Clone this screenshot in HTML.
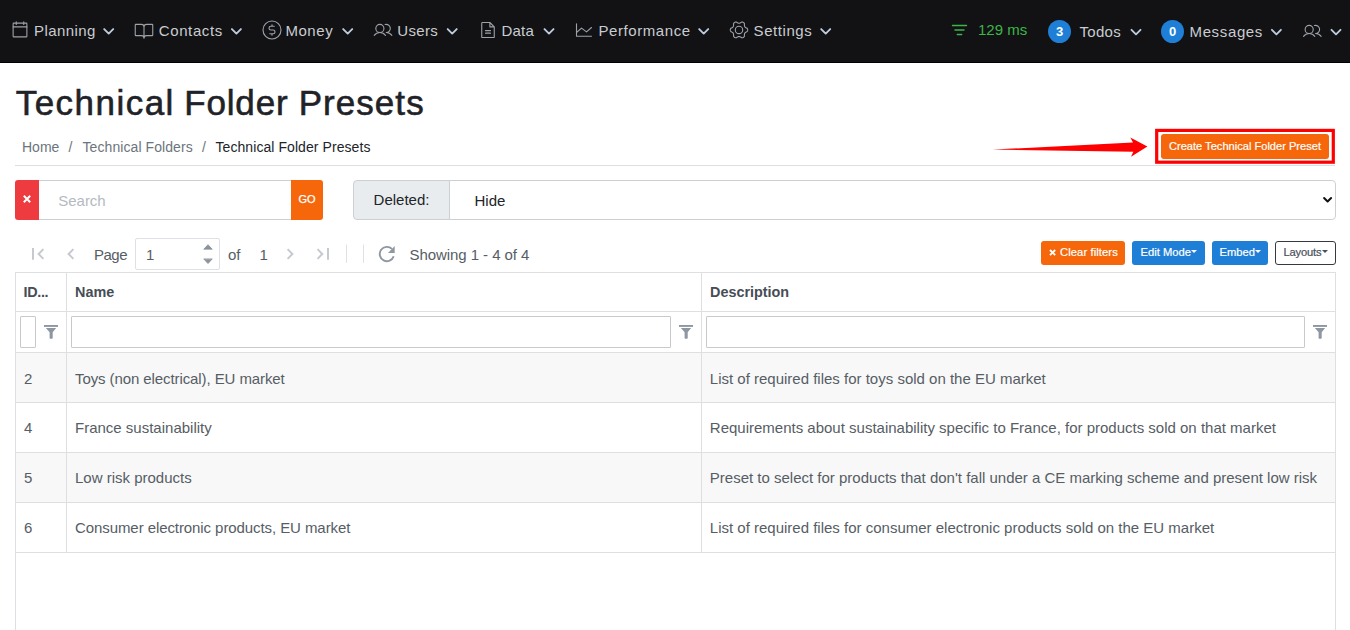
<!DOCTYPE html>
<html>
<head>
<meta charset="utf-8">
<title>Technical Folder Presets</title>
<style>
*{box-sizing:border-box;margin:0;padding:0}
html,body{width:1350px;height:630px;overflow:hidden;background:#fff}
body{font-family:"Liberation Sans",sans-serif;color:#212529;position:relative}
.abs{position:absolute;white-space:nowrap}
/* NAV */
#nav{position:absolute;left:0;top:0;width:1350px;height:63px;background:#121214;border-bottom:1px solid #000}
.ni{position:absolute;top:21px;font-size:15px;line-height:20px;color:#c9ccd1;white-space:nowrap}
.ico{position:absolute;overflow:visible}
.chev{position:absolute;top:29px;width:11px;height:6px}
.badge{position:absolute;top:20px;width:23px;height:23px;border-radius:50%;background:#1f7fd6;color:#fff;font-size:13px;font-weight:bold;line-height:23px;text-align:center}
/* HEADER */
#title{left:15.700px;top:83px;font-size:35px;line-height:40px;letter-spacing:1px;font-weight:normal;color:#1f2328;-webkit-text-stroke:0.600px #1f2328}
.bc{top:138px;font-size:14px;line-height:18px;color:#6c757d}
#hr{position:absolute;left:15px;top:165px;width:1320px;height:1px;background:#dcdfe2}

/* SEARCH */
#sx{position:absolute;left:15px;top:180px;width:24px;height:40px;background:#ee3b40;border-radius:3px 0 0 3px}
#sin{position:absolute;left:39px;top:180px;width:253px;height:40px;border:1px solid #cdd0d3;border-left:none;border-right:none;background:#fff}
#sph{left:58.200px;top:191px;font-size:15px;line-height:20px;color:#b3bac1}
#sgo{position:absolute;left:291px;top:180px;width:32px;height:40px;background:#f5670a;border-radius:0 3px 3px 0;color:#fff;font-size:11px;line-height:38px;text-align:center;-webkit-text-stroke:.25px #fff}
#dlab{position:absolute;left:353px;top:180px;width:97px;height:40px;background:#e9ecef;border:1px solid #cdd0d3;border-radius:4px 0 0 4px;font-size:15px;line-height:38px;text-align:center;color:#212529}
#dsel{position:absolute;left:449px;top:180px;width:887px;height:40px;background:#fff;border:1px solid #cdd0d3;border-radius:0 4px 4px 0}
#dsel span{position:absolute;left:24.500px;top:10px;font-size:15px;line-height:20px;color:#212529}
/* BUTTONS */
.btn{position:absolute;top:241px;height:24px;border-radius:3px;color:#fff;font-size:11.200px;line-height:23px;white-space:nowrap;-webkit-text-stroke:.2px currentColor}
.caret{display:inline-block;width:0;height:0;border-left:3.100px solid transparent;border-right:3.100px solid transparent;border-top:3.100px solid currentColor;vertical-align:2.800px;margin-left:.5px}
/* PAGER */
.pg{position:absolute;top:245px;font-size:15px;line-height:20px;color:#565d65;white-space:nowrap}
/* GRID */
#grid{position:absolute;left:15px;top:272px;width:1321px;height:358px;border:1px solid #dedfe0;border-bottom:none}
.row{position:absolute;left:0;width:1319px;border-bottom:1px solid #dedfe0}
.v{position:absolute;top:0;width:1px;background:#dedfe0}
.cell{position:absolute;font-size:15px;line-height:20px;color:#565d65;white-space:nowrap}
.hd{position:absolute;font-size:14.400px;font-weight:bold;line-height:20px;color:#464d55;white-space:nowrap}
.fin{position:absolute;border:1px solid #c8c9cb;border-radius:1px;background:#fff}
</style>
</head>
<body>
<div id="nav">
<svg class="ico" style="left:0;top:0" width="1350" height="62" viewBox="0 0 1350 62" fill="none" stroke="#9da2a9" stroke-width="1.1" stroke-linecap="round" stroke-linejoin="round">
<!-- calendar -->
<g transform="translate(10,20) scale(0.078125)" stroke-width="14"><rect x="40" y="40" width="176" height="176" rx="8"/><path d="M40 88H216M80 24V56M176 24V56"/></g>
<!-- book -->
<g transform="translate(134,20) scale(0.078125)" stroke-width="14"><path d="M128 88a32 32 0 0 1 32-32h72a8 8 0 0 1 8 8V192a8 8 0 0 1-8 8H160a32 32 0 0 0-32 32M16 192a8 8 0 0 0 8 8H96a32 32 0 0 1 32 32V88A32 32 0 0 0 96 56H24a8 8 0 0 0-8 8Z"/></g>
<!-- dollar -->
<g transform="translate(260,18) scale(0.09375)" stroke-width="12"><circle cx="128" cy="128" r="96"/><path d="M128 72V88M128 168V184M104 168h36a20 20 0 0 0 0-40H116a20 20 0 0 1 0-40h36"/></g>
<!-- users -->
<g transform="translate(373,20) scale(0.078125)" stroke-width="14"><circle cx="88" cy="108" r="52"/><path d="M155.410 57.940A52 52 0 1 1 169.520 160M16 197.400a88 88 0 0 1 144 0M169.520 160a87.900 87.900 0 0 1 72 37.400"/></g>
<!-- file -->
<g transform="translate(478,20) scale(0.078125)" stroke-width="14"><path d="M200 224H56a8 8 0 0 1-8-8V40a8 8 0 0 1 8-8h96l56 56V216a8 8 0 0 1-8 8ZM152 32V88h56M96 136h64M96 168h64"/></g>
<!-- chart -->
<g transform="translate(574,20) scale(0.078125)" stroke-width="14"><path d="M224 208H32V48M224 96L160 152 96 104 32 160"/></g>
<!-- gear -->
<circle cx="739" cy="29.900" r="3.700"/><path d="M747.70 29.90L747.67 30.28L747.58 30.65L747.44 31.01L747.22 31.35L746.93 31.66L746.34 31.87L745.98 32.10L745.66 32.33L745.38 32.54L745.13 32.76L744.92 32.98L744.76 33.22L744.63 33.49L744.54 33.78L744.48 34.10L744.43 34.46L744.40 34.84L744.37 35.27L744.49 35.89L744.37 36.30L744.18 36.65L743.94 36.96L743.66 37.22L743.35 37.43L743.01 37.60L742.64 37.71L742.26 37.76L741.86 37.75L741.44 37.65L740.97 37.24L740.58 37.05L740.23 36.88L739.90 36.75L739.59 36.64L739.29 36.57L739.00 36.55L738.71 36.57L738.41 36.64L738.10 36.75L737.77 36.88L737.42 37.05L737.03 37.24L736.56 37.65L736.14 37.75L735.74 37.76L735.36 37.71L734.99 37.60L734.65 37.43L734.34 37.22L734.06 36.96L733.82 36.65L733.63 36.30L733.51 35.89L733.63 35.27L733.60 34.84L733.57 34.46L733.52 34.10L733.46 33.78L733.37 33.49L733.24 33.23L733.08 32.98L732.87 32.76L732.62 32.54L732.34 32.33L732.02 32.10L731.66 31.87L731.07 31.66L730.78 31.35L730.56 31.01L730.42 30.65L730.33 30.28L730.30 29.90L730.33 29.52L730.42 29.15L730.56 28.79L730.78 28.45L731.07 28.14L731.66 27.93L732.02 27.70L732.34 27.47L732.62 27.26L732.87 27.04L733.08 26.82L733.24 26.57L733.37 26.31L733.46 26.02L733.52 25.70L733.57 25.34L733.60 24.96L733.63 24.53L733.51 23.91L733.63 23.50L733.82 23.15L734.06 22.84L734.34 22.58L734.65 22.37L734.99 22.20L735.36 22.09L735.74 22.04L736.14 22.05L736.56 22.15L737.03 22.56L737.42 22.75L737.77 22.92L738.10 23.05L738.41 23.16L738.71 23.23L739.00 23.25L739.29 23.23L739.59 23.16L739.90 23.05L740.23 22.92L740.58 22.75L740.97 22.56L741.44 22.15L741.86 22.05L742.26 22.04L742.64 22.09L743.01 22.20L743.35 22.37L743.66 22.58L743.94 22.84L744.18 23.15L744.37 23.50L744.49 23.91L744.37 24.53L744.40 24.96L744.43 25.34L744.48 25.70L744.54 26.02L744.63 26.31L744.76 26.58L744.92 26.82L745.13 27.04L745.38 27.26L745.66 27.47L745.98 27.70L746.34 27.93L746.93 28.14L747.22 28.45L747.44 28.79L747.58 29.15L747.67 29.52Z"/>
<!-- users right -->
<g transform="translate(1302.3,21) scale(0.078125)" stroke-width="14"><circle cx="88" cy="108" r="52"/><path d="M155.410 57.940A52 52 0 1 1 169.520 160M16 197.400a88 88 0 0 1 144 0M169.520 160a87.900 87.900 0 0 1 72 37.400"/></g>
<!-- filter (green) -->
<path d="M952.500 25.500h14M955 30h9M957.300 34.500h4.400" stroke="#3db54a" stroke-width="1.400"/>
<!-- chevrons -->
<g stroke="#bccbdf" stroke-width="1.900">
<path d="M104.2 29.1l4.500 4.500 4.500-4.500"/>
<path d="M231.9 29.1l4.500 4.500 4.500-4.500"/>
<path d="M343.2 29.1l4.500 4.500 4.500-4.500"/>
<path d="M447.7 29.1l4.500 4.500 4.500-4.500"/>
<path d="M544.5 29.1l4.500 4.500 4.500-4.500"/>
<path d="M699.2 29.1l4.500 4.500 4.500-4.500"/>
<path d="M821.2 29.1l4.500 4.500 4.500-4.500"/>
<path d="M1131.5 29.8l4.500 4.500 4.500-4.500"/>
<path d="M1271.9 29.8l4.500 4.500 4.500-4.500"/>
<path d="M1331.5 29.8l4.500 4.500 4.500-4.500"/>
</g>
</svg>
<div class="ni" style="left:34.10px;letter-spacing:0.41px">Planning</div>
<div class="ni" style="left:158.80px;letter-spacing:0.6px">Contacts</div>
<div class="ni" style="left:285.40px;letter-spacing:0.57px">Money</div>
<div class="ni" style="left:397.35px;letter-spacing:0.34px">Users</div>
<div class="ni" style="left:501.50px;letter-spacing:0.2px">Data</div>
<div class="ni" style="left:598.50px;letter-spacing:0.57px">Performance</div>
<div class="ni" style="left:753.60px;letter-spacing:0.57px">Settings</div>
<div class="ni" style="left:978px;top:20px;font-size:15px;color:#3db54a">129 ms</div>
<div class="badge" style="left:1048px">3</div>
<div class="ni" style="left:1079.40px;top:22px;letter-spacing:0.33px">Todos</div>
<div class="badge" style="left:1161px">0</div>
<div class="ni" style="left:1189.50px;top:22px;letter-spacing:0.64px">Messages</div>
</div>
<div id="title" class="abs"><span style="position:absolute;left:0;letter-spacing:1.470px">Technical</span><span style="position:absolute;left:168.600px;letter-spacing:.820px">Folder</span><span style="position:absolute;left:283px;letter-spacing:1.050px">Presets</span></div>
<div class="abs bc" style="left:22px">Home</div>
<div class="abs bc" style="left:68.500px">/</div>
<div class="abs bc" style="left:82.500px;letter-spacing:.08px">Technical Folders</div>
<div class="abs bc" style="left:202px">/</div>
<div class="abs bc" style="left:215.500px;color:#212529;letter-spacing:.07px">Technical Folder Presets</div>
<!-- arrow + highlight -->
<svg class="ico" style="left:0;top:0" width="1350" height="630" viewBox="0 0 1350 630">
<polygon points="992.500,149.600 1133,142.600 1130.300,137.400 1147.400,146.500 1131,156.700 1133.300,151.700" fill="#ff0000"/>
<rect x="1156.700" y="130.400" width="176.600" height="31.800" fill="none" stroke="#ff0000" stroke-width="3.200"/>
</svg>
<div class="abs" style="left:1161px;top:134px;width:168px;height:25px;border-radius:3px;background:#f5670a;color:#fff;font-size:11.100px;line-height:24px;text-align:center;-webkit-text-stroke:.2px #fff">Create Technical Folder Preset</div>
<div id="hr"></div>
<!-- search -->
<div id="sx"><svg class="ico" style="left:8px;top:15px" width="8" height="8" viewBox="0 0 8 8"><path d="M.8.8l6.400 6.400M7.200.8L.8 7.200" stroke="#fff" stroke-width="2" stroke-linecap="butt"/></svg></div>
<div id="sin"></div>
<div id="sph" class="abs">Search</div>
<div id="sgo">GO</div>
<div id="dlab">Deleted:</div>
<div id="dsel"><span>Hide</span><svg class="ico" style="left:872.500px;top:16.400px" width="10" height="7" viewBox="0 0 10 7"><path d="M1.100 1l3.500 3.500 3.500-3.500" fill="none" stroke="#111" stroke-width="2" stroke-linecap="round" stroke-linejoin="round"/></svg></div>
<!-- pager -->
<svg class="ico" style="left:0;top:0" width="600" height="280" viewBox="0 0 600 280" fill="none" stroke-linecap="round" stroke-linejoin="round">
<g stroke="#c6cad0" stroke-width="2" stroke-linecap="butt" stroke-linejoin="miter">
<path d="M33 248v11.800M43.400 249.100L38.600 254l4.800 4.900"/>
<path d="M73.400 249.100L68.600 254l4.800 4.900"/>
<path d="M287.600 249.100L292.400 254l-4.800 4.900"/>
<path d="M317.500 249.100L322.300 254l-4.800 4.900M328 248v11.800"/>
</g>
<path d="M346.500 245v17.500M363.500 245v17.500" stroke="#dee2e6" stroke-width="1"/>
<path d="M393.700 256.200A7.150 7.150 0 1 1 391.960 248.940" stroke="#8e97a2" stroke-width="1.900" stroke-linecap="butt"/>
<path d="M394.700 246V252.900H388z" fill="#8e97a2"/>
<path d="M204 249l4-4.300 4 4.300zM204 259.200l4 4.300 4-4.300z" fill="#8b929a" stroke="#8b929a" stroke-width=".8"/>
</svg>
<div class="pg" style="left:94px;letter-spacing:-.5px">Page</div>
<div class="abs" style="left:135px;top:238px;width:85px;height:32px;border:1px solid #dee2e6;border-radius:2px"></div>
<div class="pg" style="left:146px">1</div>
<div class="pg" style="left:228px">of</div>
<div class="pg" style="left:259.500px">1</div>
<div class="pg" style="left:409.500px;letter-spacing:-.06px">Showing 1 - 4 of 4</div>
<!-- toolbar buttons -->
<div class="btn" style="left:1041px;width:84px;background:#f5670a"><svg class="ico" style="left:8.400px;top:7.700px" width="8" height="8" viewBox="0 0 8 8"><path d="M1 1l5.200 5.200M6.200 1L1 6.200" stroke="#fff" stroke-width="1.800" stroke-linecap="butt"/></svg><span style="position:absolute;left:19px;letter-spacing:.1px">Clear filters</span></div>
<div class="btn" style="left:1132px;width:73px;background:#1f7fd6"><span style="position:absolute;left:8.500px">Edit Mode<i class="caret"></i></span></div>
<div class="btn" style="left:1212px;width:56px;background:#1f7fd6"><span style="position:absolute;left:7.500px">Embed<i class="caret"></i></span></div>
<div class="btn" style="left:1275px;width:61px;background:#fff;border:1px solid #343a40;color:#495057;line-height:21px"><span style="position:absolute;left:7.500px;letter-spacing:-.2px">Layouts<i class="caret"></i></span></div>
<div id="grid">
<div class="row" style="top:0;height:39px"></div>
<div class="row" style="top:39px;height:41px"></div>
<div class="row" style="top:80px;height:50px;background:#f8f8f8"></div>
<div class="row" style="top:130px;height:50px"></div>
<div class="row" style="top:180px;height:50px;background:#f8f8f8"></div>
<div class="row" style="top:230px;height:50px"></div>
<div class="v" style="left:50px;height:280px"></div>
<div class="v" style="left:685px;height:280px"></div>
</div>
<div class="hd" style="left:23.600px;top:282px;letter-spacing:-.35px">ID...</div>
<div class="hd" style="left:75px;top:282px">Name</div>
<div class="hd" style="left:710px;top:282px">Description</div>
<div class="fin" style="left:20px;top:316px;width:16px;height:32px"></div>
<div class="fin" style="left:71px;top:316px;width:600px;height:32px"></div>
<div class="fin" style="left:706px;top:316px;width:599px;height:32px"></div>
<svg class="ico" style="left:0;top:0" width="1350" height="400" viewBox="0 0 1350 400" fill="#8e96a1">
<g transform="translate(44,325)"><rect x="0" y="0" width="14" height="1.900"/><path d="M1.900 3.100H12.100L8.700 7.300V13c0 .45-.35.8-.8.8H6.400c-.45 0-.8-.35-.8-.8V7.300z"/></g><g transform="translate(679,325)"><rect x="0" y="0" width="14" height="1.900"/><path d="M1.900 3.100H12.100L8.700 7.300V13c0 .45-.35.8-.8.8H6.400c-.45 0-.8-.35-.8-.8V7.300z"/></g><g transform="translate(1313,325)"><rect x="0" y="0" width="14" height="1.900"/><path d="M1.900 3.100H12.100L8.700 7.300V13c0 .45-.35.8-.8.8H6.400c-.45 0-.8-.35-.8-.8V7.300z"/></g>
</svg>
<div class="cell" style="left:24px;top:369px">2</div>
<div class="cell" style="left:75px;top:369px;letter-spacing:-.09px">Toys (non electrical), EU market</div>
<div class="cell" style="left:709.800px;top:369px">List of required files for toys sold on the EU market</div>
<div class="cell" style="left:24px;top:418px">4</div>
<div class="cell" style="left:75px;top:418px">France sustainability</div>
<div class="cell" style="left:709.800px;top:418px">Requirements about sustainability specific to France, for products sold on that market</div>
<div class="cell" style="left:24px;top:468px">5</div>
<div class="cell" style="left:75px;top:468px">Low risk products</div>
<div class="cell" style="left:709.800px;top:468px">Preset to select for products that don't fall under a CE marking scheme and present low risk</div>
<div class="cell" style="left:24px;top:518px">6</div>
<div class="cell" style="left:75px;top:518px;letter-spacing:-.08px">Consumer electronic products, EU market</div>
<div class="cell" style="left:709.800px;top:518px">List of required files for consumer electronic products sold on the EU market</div>
</body>
</html>
